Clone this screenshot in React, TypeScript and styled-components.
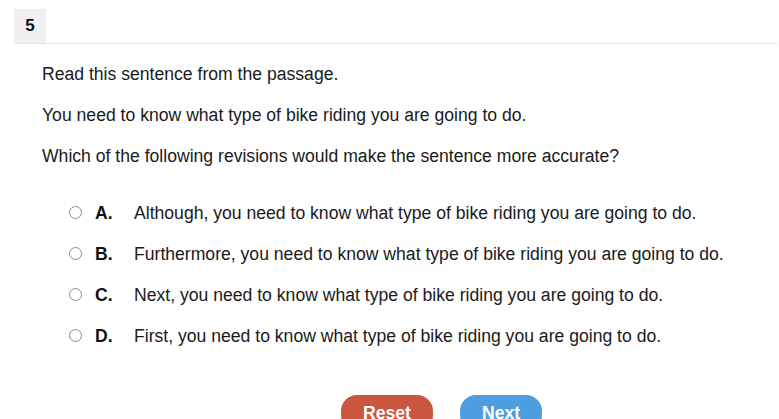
import styled, { createGlobalStyle } from "styled-components";

const GlobalStyle = createGlobalStyle`
  body {
    margin: 0;
    background: #ffffff;
    font-family: "Liberation Sans", Arial, sans-serif;
    color: #1a1a1a;
  }
`;

const Header = styled.div`
  display: flex;
  margin: 9px 1px 0 14px;
  border-bottom: 1px solid #e6e6e6;
`;
const Number = styled.div`
  width: 32px;
  height: 34px;
  background: #f0f0f0;
  display: flex;
  align-items: center;
  justify-content: center;
  font-weight: bold;
  font-size: 17px;
  color: #111;
`;
const Body = styled.div`
  padding: 20px 0 0 42px;
`;
const Para = styled.p`
  margin: 0 0 20px;
  font-size: 17.6px;
  line-height: 21px;
`;
const Options = styled.div`
  display: flex;
  flex-direction: column;
  gap: 20px;
  margin-top: 36px;
  padding-left: 27px;
`;
const Option = styled.label`
  display: flex;
  align-items: center;
  font-size: 17.6px;
  line-height: 21px;
  cursor: pointer;
`;
const Radio = styled.span`
  width: 11px;
  height: 11px;
  border: 1px solid #8a8a8a;
  border-radius: 50%;
  margin-right: 13px;
  margin-top: -2px;
  flex-shrink: 0;
`;
const Letter = styled.span`
  font-weight: bold;
  width: 39px;
  color: #111;
`;
const Buttons = styled.div`
  display: flex;
  gap: 27px;
  margin: 48px 0 0 299px;
`;
const Button = styled.button<{ $color: string; $width: number }>`
  width: ${(p) => p.$width}px;
  height: 36px;
  border: none;
  border-radius: 16px;
  background: ${(p) => p.$color};
  color: #fff;
  font-family: "Liberation Sans", Arial, sans-serif;
  font-weight: bold;
  font-size: 17.6px;
  cursor: pointer;
`;

const choices = [
  ["A.", "Although, you need to know what type of bike riding you are going to do."],
  ["B.", "Furthermore, you need to know what type of bike riding you are going to do."],
  ["C.", "Next, you need to know what type of bike riding you are going to do."],
  ["D.", "First, you need to know what type of bike riding you are going to do."],
];

function App() {
  return (
    <>
      <GlobalStyle />
      <Header>
        <Number>5</Number>
      </Header>
      <Body>
        <Para>Read this sentence from the passage.</Para>
        <Para>You need to know what type of bike riding you are going to do.</Para>
        <Para>Which of the following revisions would make the sentence more accurate?</Para>
        <Options>
          {choices.map(([letter, text]) => (
            <Option key={letter}>
              <Radio />
              <Letter>{letter}</Letter>
              {text}
            </Option>
          ))}
        </Options>
        <Buttons>
          <Button $color="#cb5640" $width={92}>Reset</Button>
          <Button $color="#4d9de0" $width={82}>Next</Button>
        </Buttons>
      </Body>
    </>
  );
}

export default App;
